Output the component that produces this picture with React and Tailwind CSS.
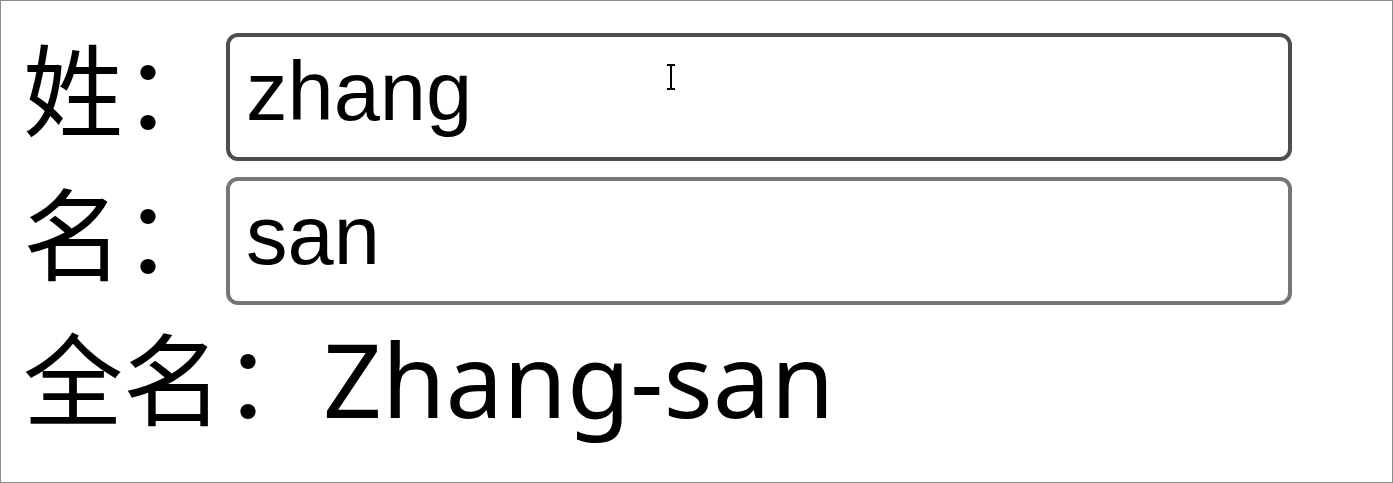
import React, { useState } from "react";

const labelFont = {
  fontFamily: '"Noto Sans", "Noto Sans CJK SC", sans-serif',
};

const NameRow = ({ label, value, onChange, focused }) => (
  <div className="flex items-center h-[128px]">
    <span className="w-[203px] shrink-0 text-[100px] leading-none text-black -mt-[14px]">
      {label}
    </span>
    <input
      value={value}
      onChange={(e) => onChange(e.target.value)}
      className={`w-[1066px] h-[128px] shrink-0 rounded-[12px] border-4 bg-white px-[16px] pb-[10px] text-[83px] text-black outline-none font-['Liberation_Sans',Arial,sans-serif] ${
        focused ? "border-[#4d4d4d]" : "border-[#767676]"
      }`}
    />
  </div>
);

export default function App() {
  const [first, setFirst] = useState("zhang");
  const [last, setLast] = useState("san");

  const fullName =
    first.charAt(0).toUpperCase() + first.slice(1) + "-" + last;

  return (
    <div
      className="relative box-border w-[1393px] h-[483px] overflow-hidden border border-[#8c8c8c] bg-white"
      style={labelFont}
    >
      <div className="pl-[22px] pt-[32px]">
        <NameRow label="姓：" value={first} onChange={setFirst} focused />
        <div className="mt-[16px]">
          <NameRow label="名：" value={last} onChange={setLast} />
        </div>
        <div className="mt-[22px] text-[100px] leading-none text-black whitespace-nowrap">
          全名：<span className="text-[103px]">{fullName}</span>
        </div>
      </div>

      {/* mouse cursor (I-beam) */}
      <svg
        className="absolute left-[665px] top-[63px]"
        width="10"
        height="26"
        viewBox="0 0 10 26"
      >
        <path
          d="M1 1h3l1 1 1-1h3M5 2v22M1 25h3l1-1 1 1h3"
          stroke="black"
          strokeWidth="2"
          fill="none"
        />
      </svg>
    </div>
  );
}
